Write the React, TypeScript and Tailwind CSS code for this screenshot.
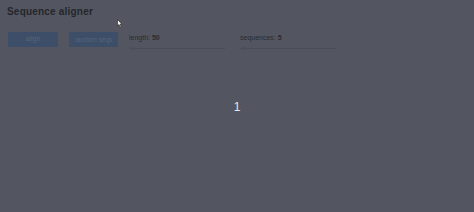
import React from 'react';

const Slider: React.FC<{ label: string; value: number }> = ({ label, value }) => (
  <div className="flex flex-col w-[96px]">
    <div className="text-[7px] leading-[9px] text-[#2a2c33]">
      {label}: <span className="font-bold">{value}</span>
    </div>
    <div className="relative mt-[6px] h-[1px] bg-[#4a4d57]">
      <div className="absolute left-[2px] top-[-1px] w-[4px] h-[3px] rounded-full bg-[#4d5059]"></div>
    </div>
  </div>
);

export default function App() {
  return (
    <div
      className="relative w-full h-[212px] bg-[#535660] overflow-hidden"
      style={{ fontFamily: '"Liberation Sans", Arial, sans-serif' }}
    >
      <div className="px-[7px] pt-[5px]">
        <h1 className="text-[10px] leading-[13px] font-bold text-[#24262c] tracking-[0.2px]">Sequence aligner</h1>
        <div className="flex items-start mt-[14px] pl-[1px]">
          <button className="w-[50px] h-[15px] bg-[#3d4e68] text-[7px] text-[#56647b]">align</button>
          <button className="ml-[11px] w-[49px] h-[15px] bg-[#3d4e68] text-[6.5px] text-[#56647b]">random seqs</button>
          <div className="ml-[11px] mt-[1px]">
            <Slider label="length" value={50} />
          </div>
          <div className="ml-[15px] mt-[1px]">
            <Slider label="sequences" value={5} />
          </div>
        </div>
      </div>

      <div className="absolute inset-0 flex items-center justify-center pt-[2px]">
        <span className="text-[12px] text-[#e4e6ea]">1</span>
      </div>

      <svg className="absolute left-[117px] top-[19px]" width="6" height="9" viewBox="0 0 6 9">
        <path d="M0.5 0.5 L0.5 7 L2 5.6 L3.2 8.3 L4.2 7.8 L3 5.2 L5 5.2 Z" fill="#f2f2f2" stroke="#222" strokeWidth="0.6" />
      </svg>
    </div>
  );
}
